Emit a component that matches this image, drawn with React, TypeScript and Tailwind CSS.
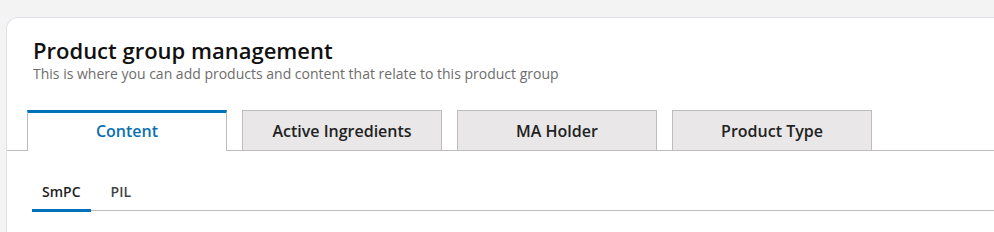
import React, { useState } from "react";

const tabs = ["Content", "Active Ingredients", "MA Holder", "Product Type"];
const subTabs = ["SmPC", "PIL"];

export default function App() {
  const [active, setActive] = useState(0);
  const [sub, setSub] = useState(0);

  return (
    <div
      className="min-h-[232px] bg-[#f3f3f3] pt-[17px] pl-[6px]"
      style={{ fontFamily: '"Open Sans", "Noto Sans", sans-serif' }}
    >
      <div className="h-[215px] rounded-tl-[12px] border-l border-t border-[#e1e1ea] bg-white">
        <div className="px-[26px] pt-[17px]">
          <h1 className="text-[22px] font-semibold leading-[30px] text-[#111]">
            Product group management
          </h1>
          <p className="text-[14px] leading-[18px] text-[#6d6d6d]">
            This is where you can add products and content that relate to this product group
          </p>
        </div>

        <div className="mt-[27px] flex gap-[15px] border-b border-[#bcbcbc] pl-[20px]">
          {tabs.map((t, i) =>
            i === active ? (
              <button
                key={t}
                onClick={() => setActive(i)}
                className="-mb-px h-[41px] w-[200px] border-x border-t-[3px] border-x-[#bcbcbc] border-t-[#0071bc] bg-white pb-[2px] text-[16px] font-semibold text-[#0a6fb3]"
              >
                {t}
              </button>
            ) : (
              <button
                key={t}
                onClick={() => setActive(i)}
                className="h-[40px] w-[200px] border border-b-0 border-[#bcbcbc] bg-[#e9e7e8] text-[16px] font-semibold text-[#222]"
              >
                {t}
              </button>
            )
          )}
        </div>

        <div className="mt-[30px] ml-[25px] flex gap-[10px] border-b border-[#bcbcbc]">
          {subTabs.map((t, i) => (
            <button
              key={t}
              onClick={() => setSub(i)}
              className={
                i === sub
                  ? "-mb-[2px] border-b-[3px] border-[#0071bc] px-[10px] pb-[7px] text-[14px] font-semibold text-[#222]"
                  : "-mb-[2px] border-b-[3px] border-transparent px-[10px] pb-[7px] text-[14px] font-semibold text-[#444]"
              }
            >
              {t}
            </button>
          ))}
        </div>
      </div>
    </div>
  );
}
